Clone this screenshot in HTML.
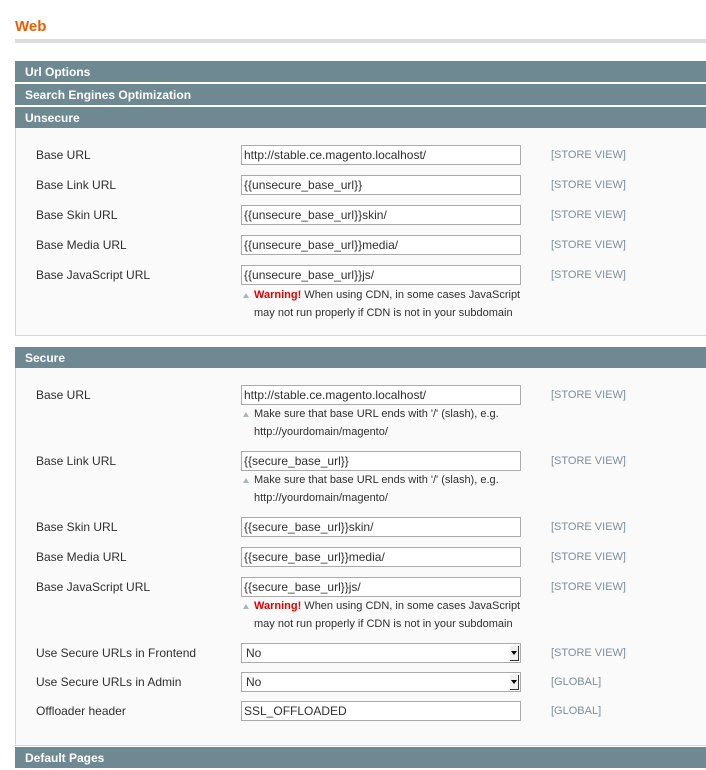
<!DOCTYPE html>
<html><head><meta charset="utf-8"><style>
body{margin:0;width:706px;height:755px;overflow:hidden;background:#fff;font-family:"Liberation Sans",Arial,sans-serif;font-size:12px;color:#2f2f2f;position:relative}
.a{position:absolute}
.t{left:15px;top:18px;font-size:15px;font-weight:bold;color:#eb5e00}
.bar{left:15px;top:39px;width:691px;height:4px;background:#dcdcdc}
.h{left:15px;width:691px;height:21px;background:#6f8992;color:#fff;font-weight:bold;font-size:12px;line-height:23px;text-indent:10px}
.b{left:15px;width:690px;background:#fafafa;border:1px solid #d6d6d6;border-top:0}
.l{left:36px;line-height:14px}
.i{left:241px;width:276px;height:18px;border:1px solid #aaa;background:#fff;line-height:18px;padding-left:2px;font-size:12px}
.s{left:551px;color:#7d8e98;font-size:11px;line-height:14px}
.n{left:254px;font-size:11px;line-height:18px;color:#2f2f2f}
.tri{left:243px;width:0;height:0;border-left:3px solid transparent;border-right:3px solid transparent;border-bottom:5px solid #a9b6bc}
.w{color:#e20000;font-weight:bold}
.dd{position:absolute;right:1px;top:2px;width:8px;height:14px;background:#f0f0f0;border-right:1px solid #333;border-bottom:1px solid #333}
.dd:after{content:"";position:absolute;left:1px;top:5px;border-left:3px solid transparent;border-right:3px solid transparent;border-top:4px solid #000}
</style></head><body>
<div class="a t">Web</div>
<div class="a bar"></div>
<div class="a h" style="top:61px">Url Options</div>
<div class="a h" style="top:84px">Search Engines Optimization</div>
<div class="a h" style="top:107px">Unsecure</div>
<div class="a b" style="top:128px;height:207px"></div>

<div class="a l" style="top:148px">Base URL</div><div class="a i" style="top:145px">http://stable.ce.magento.localhost/</div><div class="a s" style="top:148px">[STORE VIEW]</div>
<div class="a l" style="top:178px">Base Link URL</div><div class="a i" style="top:175px">{{unsecure_base_url}}</div><div class="a s" style="top:178px">[STORE VIEW]</div>
<div class="a l" style="top:208px">Base Skin URL</div><div class="a i" style="top:205px">{{unsecure_base_url}}skin/</div><div class="a s" style="top:208px">[STORE VIEW]</div>
<div class="a l" style="top:238px">Base Media URL</div><div class="a i" style="top:235px">{{unsecure_base_url}}media/</div><div class="a s" style="top:238px">[STORE VIEW]</div>
<div class="a l" style="top:268px">Base JavaScript URL</div><div class="a i" style="top:265px">{{unsecure_base_url}}js/</div><div class="a s" style="top:268px">[STORE VIEW]</div>
<div class="a tri" style="top:293px"></div>
<div class="a n" style="top:286px"><span class="w">Warning!</span> When using CDN, in some cases JavaScript<br>may not run properly if CDN is not in your subdomain</div>

<div class="a h" style="top:347px">Secure</div>
<div class="a b" style="top:368px;height:377px"></div>

<div class="a l" style="top:388px">Base URL</div><div class="a i" style="top:385px">http://stable.ce.magento.localhost/</div><div class="a s" style="top:388px">[STORE VIEW]</div>
<div class="a tri" style="top:412px"></div>
<div class="a n" style="top:405px">Make sure that base URL ends with '/' (slash), e.g.<br>http://yourdomain/magento/</div>
<div class="a l" style="top:454px">Base Link URL</div><div class="a i" style="top:451px">{{secure_base_url}}</div><div class="a s" style="top:454px">[STORE VIEW]</div>
<div class="a tri" style="top:478px"></div>
<div class="a n" style="top:471px">Make sure that base URL ends with '/' (slash), e.g.<br>http://yourdomain/magento/</div>
<div class="a l" style="top:520px">Base Skin URL</div><div class="a i" style="top:517px">{{secure_base_url}}skin/</div><div class="a s" style="top:520px">[STORE VIEW]</div>
<div class="a l" style="top:550px">Base Media URL</div><div class="a i" style="top:547px">{{secure_base_url}}media/</div><div class="a s" style="top:550px">[STORE VIEW]</div>
<div class="a l" style="top:580px">Base JavaScript URL</div><div class="a i" style="top:577px">{{secure_base_url}}js/</div><div class="a s" style="top:580px">[STORE VIEW]</div>
<div class="a tri" style="top:604px"></div>
<div class="a n" style="top:597px"><span class="w">Warning!</span> When using CDN, in some cases JavaScript<br>may not run properly if CDN is not in your subdomain</div>
<div class="a l" style="top:646px">Use Secure URLs in Frontend</div><div class="a i" style="top:643px;padding-left:4px;width:274px">No<span class="dd"></span></div><div class="a s" style="top:646px">[STORE VIEW]</div>
<div class="a l" style="top:675px">Use Secure URLs in Admin</div><div class="a i" style="top:672px;padding-left:4px;width:274px">No<span class="dd"></span></div><div class="a s" style="top:675px">[GLOBAL]</div>
<div class="a l" style="top:704px">Offloader header</div><div class="a i" style="top:701px">SSL_OFFLOADED</div><div class="a s" style="top:704px">[GLOBAL]</div>

<div class="a h" style="top:747px">Default Pages</div>
</body></html>
